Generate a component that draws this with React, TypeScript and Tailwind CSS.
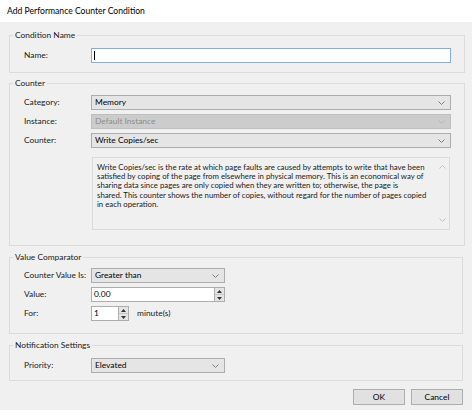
import React from 'react';

const font = { fontFamily: 'Lato, "Noto Sans", "Liberation Sans", sans-serif' };

const description = [
  'Write Copies/sec is the rate at which page faults are caused by attempts to write that have been',
  'satisfied by coping of the page from elsewhere in physical memory. This is an economical way of',
  'sharing data since pages are only copied when they are written to; otherwise, the page is',
  'shared. This counter shows the number of copies, without regard for the number of pages copied',
  'in each operation.',
];

function Chevron({ disabled }: { disabled?: boolean }) {
  return (
    <svg width="7" height="4" viewBox="0 0 7 4" className="shrink-0">
      <path d="M0.5 0.5 L3.5 3.5 L6.5 0.5" fill="none" stroke={disabled ? '#b8b8b8' : '#808080'} strokeWidth="1" />
    </svg>
  );
}

function Select({ value, width, disabled }: { value: string; width: string; disabled?: boolean }) {
  return (
    <div
      className={`${width} h-[15px] flex items-center justify-between pl-[3px] pr-[5px] border ${
        disabled ? 'bg-[#cccccc] border-[#bfbfbf] text-[#8d8d8d]' : 'bg-[#e5e5e5] border-[#adadad] text-black'
      }`}
    >
      <span className="leading-none">{value}</span>
      <Chevron disabled={disabled} />
    </div>
  );
}

function Spinner() {
  return (
    <div className="w-[10px] h-full flex flex-col border-l border-[#adadad] bg-[#e5e5e5]">
      <div className="flex-1 flex items-center justify-center border-b border-[#c8c8c8]">
        <svg width="5" height="3" viewBox="0 0 5 3"><path d="M0 3 L2.5 0 L5 3 Z" fill="#333" /></svg>
      </div>
      <div className="flex-1 flex items-center justify-center">
        <svg width="5" height="3" viewBox="0 0 5 3"><path d="M0 0 L2.5 3 L5 0 Z" fill="#333" /></svg>
      </div>
    </div>
  );
}

function Row({ label, children }: { label: string; children: React.ReactNode }) {
  return (
    <div className="flex items-center h-[15px]">
      <div className="w-[67px] shrink-0 whitespace-nowrap text-[#1a1a1a]">{label}</div>
      {children}
    </div>
  );
}

function Group({ title, className, children }: { title: string; className: string; children: React.ReactNode }) {
  return (
    <fieldset className={`border border-[#dcdcdc] pl-[14px] pr-[13px] ${className}`}>
      <legend className="-ml-[11px] px-[2px] h-[12px] leading-[12px] text-[#1a1a1a]">{title}</legend>
      {children}
    </fieldset>
  );
}

export default function App() {
  return (
    <div className="w-[474px] h-[413px] bg-white text-[8.4px]" style={font}>
      <div className="w-[472px] h-[410px] flex flex-col">
        <div className="h-[22px] flex items-center pl-[7px] text-[8.6px] text-black bg-white">
          Add Performance Counter Condition
        </div>
        <div className="flex-1 bg-[#f0f0f0] px-[9px] pt-[7px] flex flex-col">
          <Group title="Condition Name" className="pt-[7px] pb-[9px]">
            <Row label="Name:">
              <div className="w-[360px] h-[15px] bg-white border border-[#86aed8] flex items-center pl-[2px]">
                <div className="w-px h-[9px] bg-black" />
              </div>
            </Row>
          </Group>

          <Group title="Counter" className="mt-[4px] pt-[6px] pb-[15px]">
            <div className="flex flex-col gap-[4px]">
              <Row label="Category:">
                <Select value="Memory" width="w-[360px]" />
              </Row>
              <Row label="Instance:">
                <Select value="Default Instance" width="w-[360px]" disabled />
              </Row>
              <Row label="Counter:">
                <Select value="Write Copies/sec" width="w-[360px]" />
              </Row>
            </div>
            <div className="ml-[68px] mt-[9px] w-[358px] h-[73px] border border-[#dcdcdc] flex">
              <div className="flex-1 pl-[4px] pt-[5px] leading-[9.2px] text-[7.8px] text-[#1a1a1a] whitespace-nowrap">
                {description.map((line) => (
                  <div key={line}>{line}</div>
                ))}
              </div>
              <div className="w-[14px] flex flex-col items-center justify-between py-[7px]">
                <svg width="7" height="4" viewBox="0 0 7 4"><path d="M0.5 3.5 L3.5 0.5 L6.5 3.5" fill="none" stroke="#c2c2c2" /></svg>
                <svg width="7" height="4" viewBox="0 0 7 4"><path d="M0.5 0.5 L3.5 3.5 L6.5 0.5" fill="none" stroke="#c2c2c2" /></svg>
              </div>
            </div>
          </Group>

          <Group title="Value Comparator" className="mt-[5px] pt-[5px] pb-[12px]">
            <div className="flex flex-col gap-[4px]">
              <Row label="Counter Value Is:">
                <Select value="Greater than" width="w-[134px]" />
              </Row>
              <Row label="Value:">
                <div className="w-[134px] h-[15px] bg-white border border-[#adadad] flex">
                  <span className="flex-1 pl-[2px] leading-[13px]">0.00</span>
                  <Spinner />
                </div>
              </Row>
              <Row label="For:">
                <div className="w-[38px] h-[15px] bg-white border border-[#adadad] flex">
                  <span className="flex-1 pl-[2px] leading-[13px]">1</span>
                  <Spinner />
                </div>
                <span className="ml-[8px] text-[#1a1a1a]">minute(s)</span>
              </Row>
            </div>
          </Group>

          <Group title="Notification Settings" className="mt-[5px] pt-[7px] pb-[7px]">
            <Row label="Priority:">
              <Select value="Elevated" width="w-[134px]" />
            </Row>
          </Group>

          <div className="mt-[8px] flex justify-end gap-[6px]">
            <button className="w-[52px] h-[16px] bg-[#e1e1e1] border border-[#adadad] leading-none">OK</button>
            <button className="w-[52px] h-[16px] bg-[#e1e1e1] border border-[#adadad] leading-none">Cancel</button>
          </div>
        </div>
      </div>
    </div>
  );
}
